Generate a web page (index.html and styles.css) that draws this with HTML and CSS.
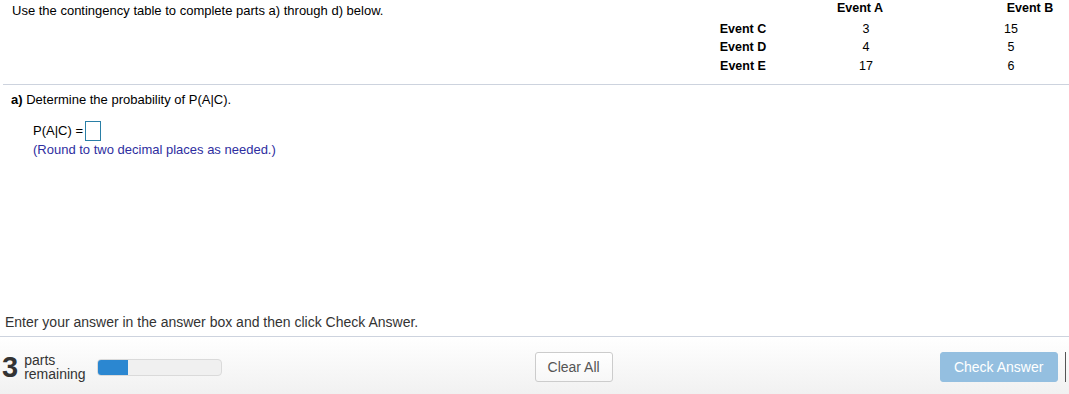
FILE: index.html
```html
<!DOCTYPE html>
<html lang="en">
<head>
  <meta charset="UTF-8" />
  <title>Contingency table</title>
  <link rel="stylesheet" href="styles.css">
</head>
<body>
  <div class="page">
    <div class="question">
      <p class="intro">Use the contingency table to complete parts a) through d) below.</p>
      <div class="ctable">
        <span></span><b class="head">Event A</b><b class="head colb">Event B</b>
        <b class="label">Event C</b><span class="num">3</span><span class="num colb">15</span>
        <b class="label">Event D</b><span class="num">4</span><span class="num colb">5</span>
        <b class="label">Event E</b><span class="num">17</span><span class="num colb">6</span>
      </div>
    </div>

    <div class="part">
      <p class="part-title"><b>a)</b> Determine the probability of P(A|C).</p>
      <div class="answer-line">P(A|C) = <span class="answer-box"></span></div>
      <p class="hint">(Round to two decimal places as needed.)</p>
    </div>

    <p class="status">Enter your answer in the answer box and then click Check Answer.</p>

    <div class="footer">
      <div class="remaining">
        <span class="big">3</span>
        <span class="small">parts<br>remaining</span>
        <div class="progress"><div class="fill" style="width: 25%"></div></div>
      </div>
      <button class="btn clear">Clear All</button>
      <button class="btn check">Check Answer</button>
      <span class="divider"></span>
    </div>
  </div>
</body>
</html>
```

FILE: styles.css
```css
body {
  margin: 0;
  font-family: "Liberation Sans", Arial, sans-serif;
  color: #000;
  background: #fff;
}
p {
  margin: 0;
}
.page {
  width: 1069px;
  height: 394px;
  display: flex;
  flex-direction: column;
  overflow: hidden;
}
.question {
  display: flex;
  justify-content: space-between;
  height: 84px;
  margin-left: 3px;
  padding-left: 9px;
  border-bottom: 1px solid #cdd3de;
}
.intro {
  font-size: 13px;
  line-height: 14px;
  padding-top: 4px;
}
.ctable {
  display: grid;
  grid-template-columns: 74px 160px 130px;
  grid-template-rows: 21px 18px 19px 14px;
  font-size: 12.5px;
  line-height: 14px;
  text-align: center;
  align-items: start;
  padding-top: 1px;
  margin-right: -1px;
}
.colb {
  padding-left: 50px;
}
.num {
  padding-left: 12px;
}
.part {
  padding: 8px 0 0 11px;
  font-size: 13px;
  line-height: 14px;
}
.answer-line {
  display: flex;
  align-items: center;
  margin: 14px 0 0 22px;
  height: 20px;
}
.answer-box {
  display: inline-block;
  width: 14px;
  height: 18px;
  margin-left: 2px;
  border: 1px solid #2a7fa6;
}
.hint {
  margin: 2px 0 0 22px;
  color: #2e2ea0;
}
.status {
  margin-top: auto;
  padding: 0 0 6px 5px;
  font-size: 14px;
  line-height: 16px;
  color: #333;
  border-bottom: 1px solid #cdd3de;
}
.footer {
  height: 57px;
  display: flex;
  align-items: center;
  padding-top: 3px;
  box-sizing: border-box;
  background: linear-gradient(#fff, #f1f1f1);
}
.remaining {
  display: flex;
  align-items: center;
  margin-left: 2px;
}
.big {
  font-size: 29px;
  font-weight: bold;
  color: #333;
  line-height: 30px;
}
.small {
  font-size: 14px;
  line-height: 14px;
  color: #333;
  margin-left: 6px;
}
.progress {
  width: 123px;
  height: 15px;
  margin-left: 11px;
  background: #f0f0f0;
  border: 1px solid #dadada;
  border-radius: 4px;
  overflow: hidden;
}
.fill {
  height: 100%;
  background: #2b87d1;
}
.btn {
  height: 30px;
  font-family: "Liberation Sans", Arial, sans-serif;
  font-size: 14px;
  border-radius: 3px;
  padding: 0;
}
.clear {
  width: 78px;
  margin-left: 313px;
  color: #555;
  background: linear-gradient(#fff, #f7f7f7);
  border: 1px solid #ccc;
}
.check {
  width: 118px;
  margin-left: 327px;
  color: #fff;
  background: #94bfe0;
  border: 1px solid #94bfe0;
}
.divider {
  width: 1px;
  height: 30px;
  margin-left: 7px;
  background: #555;
}
```
